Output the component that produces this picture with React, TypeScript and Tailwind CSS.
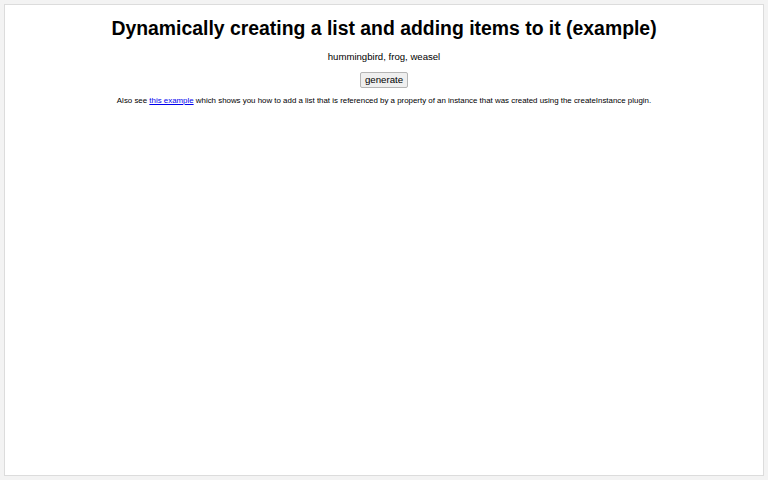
import { useState } from "react";

const animals = ["hummingbird", "frog", "weasel"];

export default function App() {
  const [items, setItems] = useState<string[]>(animals);

  return (
    <div className="h-[480px] w-full bg-[#f3f3f3] p-[4px] font-['Liberation_Sans',Arial,sans-serif] text-black">
      <div className="h-[472px] w-[760px] border border-[#dcdcdc] bg-white pt-[11px] text-center">
        <h1 className="text-[19.4px] font-bold leading-[24px]">
          Dynamically creating a list and adding items to it (example)
        </h1>
        <p className="mt-[11px] text-[9.6px] leading-[12px]">{items.join(", ")}</p>
        <button
          type="button"
          className="mt-[9px] h-[16px] rounded-[2px] border border-[#b5b5b5] bg-[#efefef] px-[4px] text-[9.7px] leading-[14px]"
          onClick={() => setItems([...animals].sort(() => Math.random() - 0.5))}
        >
          generate
        </button>
        <p className="mt-[6px] text-[7.9px] leading-[10px]">
          Also see{" "}
          <a href="#" className="text-[#0000ee] underline">
            this example
          </a>{" "}
          which shows you how to add a list that is referenced by a property of an instance that was
          created using the createInstance plugin.
        </p>
      </div>
    </div>
  );
}
